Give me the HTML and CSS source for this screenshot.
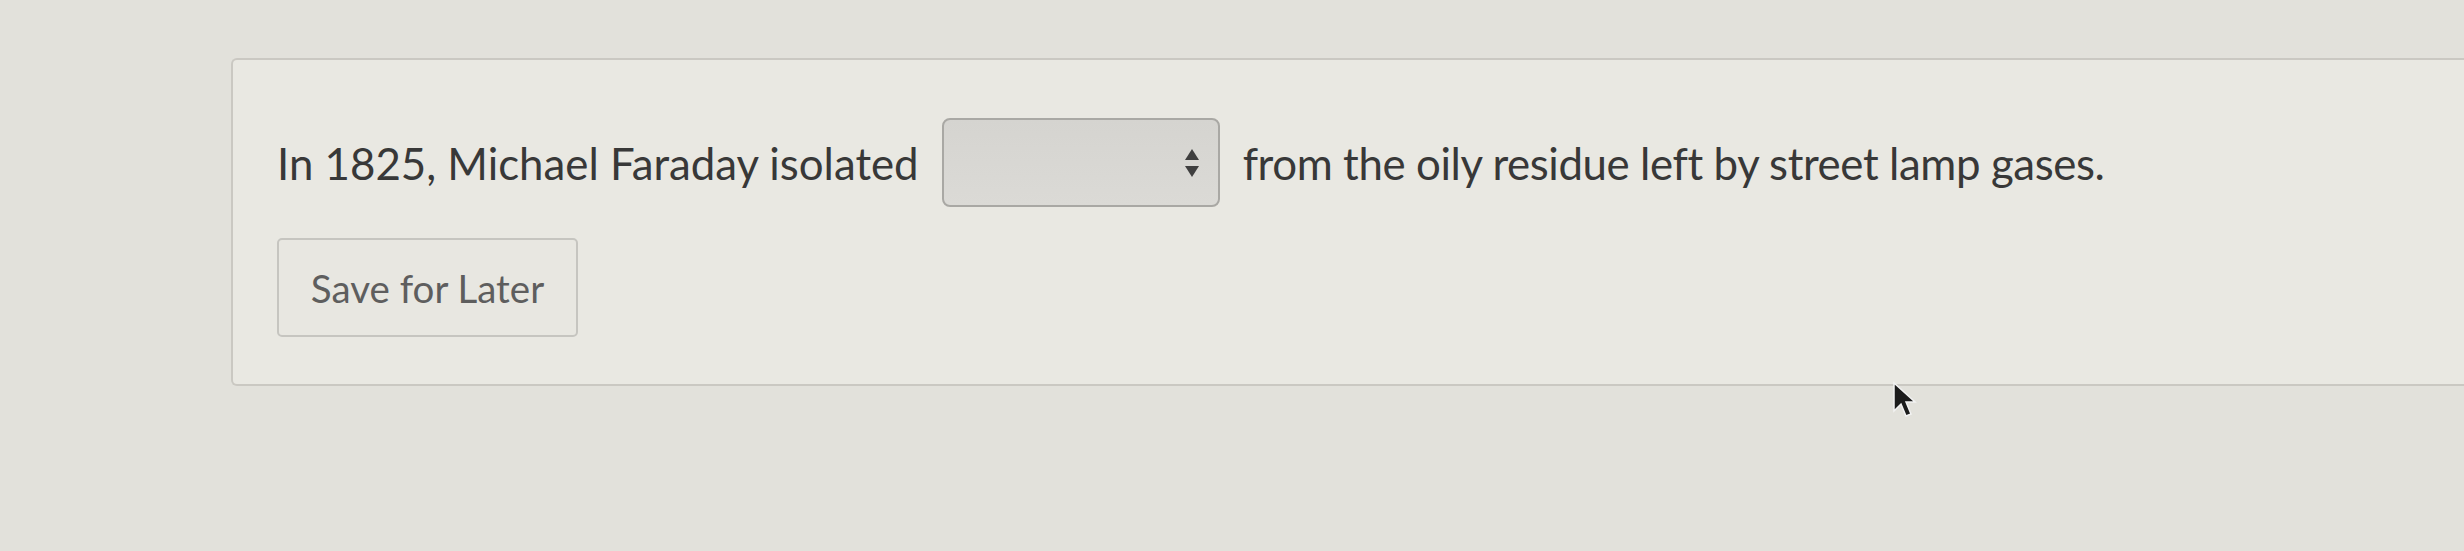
FILE: index.html
```html
<!DOCTYPE html>
<html lang="en">
<head>
<meta charset="utf-8">
<title>Question</title>
<link rel="stylesheet" href="styles.css">
</head>
<body>
<main class="page">
  <section class="card">
    <div class="question">
      <span class="text">In 1825, Michael Faraday isolated</span>
      <span class="dropdown" role="combobox" aria-label="answer">
        <svg class="arrows" width="16" height="30" viewBox="0 0 16 30"><path d="M8 1 L15 12 L1 12 Z" fill="#3f3f3f"/><path d="M8 29 L15 18 L1 18 Z" fill="#3f3f3f"/></svg>
      </span>
      <span class="text text-tight">from the oily residue left by street lamp gases.</span>
    </div>
    <button class="save">Save for Later</button>
  </section>
  <svg class="cursor" width="26" height="38" viewBox="0 0 26 38"><path d="M2 2 L2 30 L9 23 L14 35 L19 33 L14 21 L23 21 Z" fill="#1c1c1c" stroke="#f2f2f2" stroke-width="1.5"/></svg>
</main>
</body>
</html>
```
FILE: styles.css
```css
html, body {
  margin: 0;
  padding: 0;
}
body {
  background: #e2e1db;
  font-family: Lato, "Open Sans", "Liberation Sans", sans-serif;
  width: 2464px;
  height: 551px;
  overflow: hidden;
}
.page {
  position: relative;
  padding-top: 58px;
  padding-left: 231px;
}
.card {
  background: #e9e8e2;
  border: 2px solid #cac8c2;
  border-right: none;
  border-radius: 6px 0 0 6px;
  padding: 58px 0 47px 44px;
}
.question {
  display: flex;
  align-items: center;
  gap: 23px;
  height: 89px;
}
.text {
  font-size: 43.8px;
  color: #383838;
  white-space: nowrap;
}
.text-tight {
  letter-spacing: -0.4px;
}
.dropdown {
  width: 278px;
  height: 89px;
  box-sizing: border-box;
  border: 2px solid #a9a8a4;
  border-radius: 8px;
  background: linear-gradient(180deg, #d5d4d0 0%, #dbdad6 100%);
  display: flex;
  align-items: center;
  justify-content: flex-end;
  padding-right: 18px;
}
.save {
  display: block;
  margin-top: 31px;
  width: 301px;
  height: 99px;
  box-sizing: border-box;
  border: 2px solid #c6c5c0;
  border-radius: 5px;
  background: #e8e7e1;
  font-family: Lato, "Open Sans", "Liberation Sans", sans-serif;
  font-size: 38.5px;
  color: #5e5e5e;
  padding: 0;
}
.cursor {
  position: absolute;
  left: 1892px;
  top: 381px;
}
```
